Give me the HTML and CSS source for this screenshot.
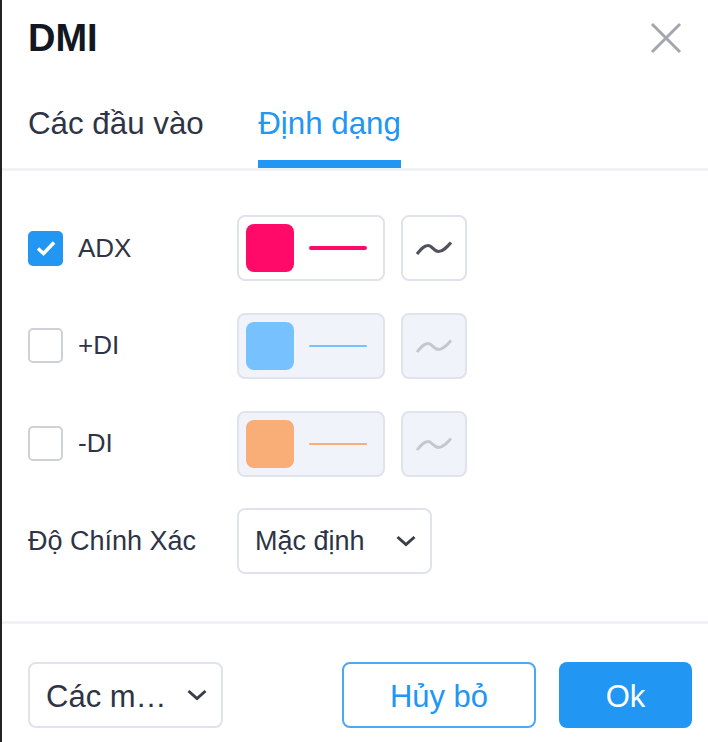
FILE: index.html
```html
<!DOCTYPE html>
<html lang="vi">
<head>
  <meta charset="UTF-8" />
  <title>DMI</title>
  <link rel="stylesheet" href="styles.css">
</head>
<body>
  <div class="dialog">
    <!-- header -->
    <header class="dialog-head">
      <h1>DMI</h1>
      <button class="close" aria-label="Close">
        <svg width="32" height="32" viewBox="0 0 32 32"><path d="M2 2 L30 30 M30 2 L2 30" /></svg>
      </button>
    </header>

    <!-- tabs -->
    <nav class="tabs">
      <a class="tab" href="#">Các đầu vào</a>
      <a class="tab active" href="#">Định dạng</a>
    </nav>

    <!-- style rows -->
    <main class="dialog-body">
      <div class="row">
        <span class="check on">
          <svg width="22" height="16" viewBox="0 0 22 16"><path d="M3 8.5 L8.5 13.5 L19 2.5" /></svg>
        </span>
        <span class="label">ADX</span>
        <div class="color-box">
          <span class="swatch pink"></span>
          <span class="line thick pink"></span>
        </div>
        <div class="plot-box">
          <svg width="38" height="16" viewBox="0 0 38 16"><path d="M2 14 C6 9 9 5.5 13 5.5 C17 5.5 19 11.5 23.5 11.5 C28 11.5 32 7 36 2.5" /></svg>
        </div>
      </div>

      <div class="row off">
        <span class="check"></span>
        <span class="label">+DI</span>
        <div class="color-box">
          <span class="swatch blue"></span>
          <span class="line blue"></span>
        </div>
        <div class="plot-box">
          <svg width="38" height="16" viewBox="0 0 38 16"><path d="M2 14 C6 9 9 5.5 13 5.5 C17 5.5 19 11.5 23.5 11.5 C28 11.5 32 7 36 2.5" /></svg>
        </div>
      </div>

      <div class="row off">
        <span class="check"></span>
        <span class="label">-DI</span>
        <div class="color-box">
          <span class="swatch orange"></span>
          <span class="line orange"></span>
        </div>
        <div class="plot-box">
          <svg width="38" height="16" viewBox="0 0 38 16"><path d="M2 14 C6 9 9 5.5 13 5.5 C17 5.5 19 11.5 23.5 11.5 C28 11.5 32 7 36 2.5" /></svg>
        </div>
      </div>

      <div class="row">
        <span class="precision">Độ Chính Xác</span>
        <div class="select wide">
          <span class="select-text">Mặc định</span>
          <svg class="chev" width="22" height="12" viewBox="0 0 22 12"><path d="M2.5 2 L11 9.5 L19.5 2" /></svg>
        </div>
      </div>
    </main>

    <!-- footer -->
    <footer class="dialog-foot">
      <div class="select small">
        <span class="select-text">Các m…</span>
        <svg class="chev" width="22" height="12" viewBox="0 0 22 12"><path d="M2.5 2 L11 9.5 L19.5 2" /></svg>
      </div>
      <div class="actions">
        <button class="btn ghost">Hủy bỏ</button>
        <button class="btn primary">Ok</button>
      </div>
    </footer>
  </div>
</body>
</html>
```

FILE: styles.css
```css
/* --- tokens --- */
:root {
  --blue: #2196f3;
  --text: #2e3445;
  --border: #e0e3eb;
  --disabled: #f0f3fa;
}

* { box-sizing: border-box; margin:0; padding:0; }

body {
  font-family: "Liberation Sans", Arial, sans-serif;
  color: var(--text);
  background:#fff;
}

.dialog {
  width:708px;
  height:742px;
  border-left:2px solid #222;
  overflow:hidden;
}

/* --- header --- */
.dialog-head {
  display:flex;
  justify-content:space-between;
  align-items:center;
  height:76px;
  padding:0 26px 0 26px;
}
.dialog-head h1 {
  font-size:38px;
  line-height:76px;
  color:#131722;
}
.close { background:none; border:none; display:flex; }
.close path { stroke:#a3a6af; stroke-width:3; fill:none; }

/* --- tabs --- */
.tabs {
  display:flex;
  gap:54.5px;
  height:95px;
  padding:0 0 0 26px;
  border-bottom:3px solid #f0f2f5;
}
.tab {
  display:block;
  height:92px;
  padding-top:30px;
  font-size:31.3px;
  line-height:36px;
  color:var(--text);
  text-decoration:none;
}
.tab.active {
  color:var(--blue);
  border-bottom:8px solid var(--blue);
}

/* --- rows --- */
.dialog-body {
  display:flex;
  flex-direction:column;
  gap:31.8px;
  height:453px;
  padding:44px 26px 0;
  border-bottom:3px solid #f0f2f5;
}
.row {
  display:flex;
  align-items:center;
  height:66px;
}
.check {
  flex:none;
  width:35px;
  height:35px;
  display:flex;
  align-items:center;
  justify-content:center;
  border:2px solid #cfd1d9;
  border-radius:5px;
}
.check.on { background:var(--blue); border-color:var(--blue); }
.check path { stroke:#fff; stroke-width:3.5; fill:none; }
.label {
  width:174px;
  padding-left:15px;
  font-size:26px;
}
.precision { width:209px; font-size:27px; }

.color-box, .plot-box {
  height:66px;
  display:flex;
  align-items:center;
  border:2px solid var(--border);
  border-radius:8px;
  background:#fff;
}
.color-box { width:148px; padding-left:7px; gap:15px; }
.plot-box { width:66px; margin-left:16px; justify-content:center; }
.plot-box path { stroke:#50535e; stroke-width:3.2; fill:none; }

.swatch { width:48px; height:48px; border-radius:8px; }
.line { width:58px; height:2px; border-radius:1px; }
.line.thick { height:4px; border-radius:2px; }
.pink { background:#ff0a68; }
.blue { background:#78c1ff; }
.orange { background:#f9ad77; }

.off .color-box, .off .plot-box { background:var(--disabled); }
.off .plot-box path { stroke:#c5c7cf; stroke-width:2.8; }

/* --- select --- */
.select {
  height:66px;
  display:flex;
  align-items:center;
  justify-content:space-between;
  padding:0 13px 0 16px;
  border:2px solid var(--border);
  border-radius:8px;
  font-size:27px;
}
.select.wide { width:195px; }
.select.small { width:195px; font-size:31px; }
.select.small .select-text { padding-top:3px; }
.chev path { stroke:#3a3e4a; stroke-width:3; fill:none; }

/* --- footer --- */
.dialog-foot {
  display:flex;
  justify-content:space-between;
  padding:38px 16px 0 26px;
}
.actions { display:flex; gap:23px; }
.btn {
  height:66px;
  padding-top:3px;
  border-radius:8px;
  font-family:inherit;
  font-size:31px;
}
.btn.ghost {
  width:194px;
  background:#fff;
  border:2px solid #4aa8f5;
  color:var(--blue);
}
.btn.primary {
  width:133px;
  background:var(--blue);
  border:none;
  color:#fff;
}
```
